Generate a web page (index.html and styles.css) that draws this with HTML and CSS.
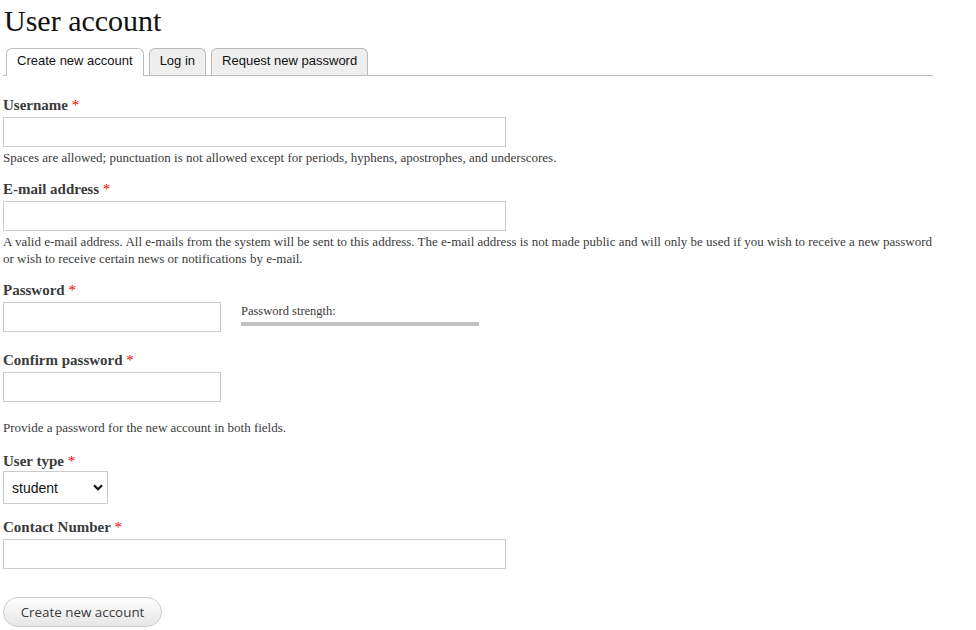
FILE: index.html
```html
<!DOCTYPE html>
<html lang="en">
<head>
<meta charset="utf-8">
<title>User account</title>
<link rel="stylesheet" href="styles.css">
</head>
<body>
<div class="page">
  <h1 class="title">User account</h1>
  <ul class="tabs">
    <li class="tab active">Create new account</li>
    <li class="tab">Log in</li>
    <li class="tab">Request new password</li>
  </ul>
  <form class="form">
    <div class="item">
      <label class="label">Username <span class="req">*</span></label>
      <input class="input wide" type="text">
      <div class="desc">Spaces are allowed; punctuation is not allowed except for periods, hyphens, apostrophes, and underscores.</div>
    </div>
    <div class="item">
      <label class="label">E-mail address <span class="req">*</span></label>
      <input class="input wide" type="text">
      <div class="desc">A valid e-mail address. All e-mails from the system will be sent to this address. The e-mail address is not made public and will only be used if you wish to receive a new password or wish to receive certain news or notifications by e-mail.</div>
    </div>
    <div class="item pass">
      <label class="label">Password <span class="req">*</span></label>
      <div class="pass-row">
        <input class="input short" type="password">
        <div class="strength">
          <div class="strength-text">Password strength:</div>
          <div class="strength-bar"></div>
        </div>
      </div>
    </div>
    <div class="item confirm">
      <label class="label">Confirm password <span class="req">*</span></label>
      <input class="input short" type="password">
    </div>
    <div class="desc provide">Provide a password for the new account in both fields.</div>
    <div class="item usertype">
      <label class="label">User type <span class="req">*</span></label>
      <div class="select-wrap">
        <select class="select"><option>student</option></select>
        <svg class="chev" width="10" height="7" viewBox="0 0 10 7"><path d="M1 1.2 L5 5.2 L9 1.2" fill="none" stroke="#111" stroke-width="2.2"/></svg>
      </div>
    </div>
    <div class="item contact">
      <label class="label">Contact Number <span class="req">*</span></label>
      <input class="input wide" type="text">
    </div>
    <button class="button" type="button">Create new account</button>
  </form>
</div>
</body>
</html>
```
FILE: styles.css
```css
html, body {
  margin: 0;
  padding: 0;
  background: #fff;
}
.page {
  padding: 0 43px 0 3px;
  font-family: "Liberation Serif", Georgia, serif;
  color: #3b3b3b;
}
.title {
  margin: 0;
  padding: 3px 0 0 1px;
  font-family: "Liberation Serif", Georgia, serif;
  font-weight: normal;
  font-size: 30px;
  line-height: 35px;
  color: #111;
}
.tabs {
  list-style: none;
  margin: 10px 0 0 0;
  padding: 0 0 0 3px;
  display: flex;
  gap: 5px;
  border-bottom: 1px solid #bbb;
  height: 27px;
}
.tab {
  font-family: "Liberation Sans", Arial, sans-serif;
  font-size: 13px;
  color: #111;
  background: #eee;
  border: 1px solid #bbb;
  border-bottom: none;
  border-radius: 6px 6px 0 0;
  padding: 0 10px;
  height: 27px;
  line-height: 24px;
  box-sizing: border-box;
}
.tab.active {
  background: #fff;
  height: 28px;
}
.form {
  margin-top: 20px;
}
.item {
  display: flex;
  flex-direction: column;
  align-items: flex-start;
}
.label {
  font-weight: bold;
  font-size: 15px;
  line-height: 18px;
  margin-bottom: 3px;
  color: #3b3b3b;
}
.req {
  color: #e00;
  font-weight: normal;
}
.input {
  box-sizing: border-box;
  height: 30px;
  border: 1px solid #ccc;
  margin: 0;
  padding: 4px;
  font-size: 13px;
  background: #fff;
}
.wide { width: 503px; }
.short { width: 218px; }
.desc {
  font-size: 13px;
  line-height: 17px;
  margin-top: 2px;
  margin-bottom: 14px;
  color: #3b3b3b;
}
.pass-row {
  display: flex;
  align-items: flex-start;
  gap: 20px;
}
.strength {
  width: 238px;
  padding-top: 2px;
}
.strength-text {
  font-size: 12.5px;
  line-height: 14px;
}
.strength-bar {
  margin-top: 4px;
  height: 4px;
  background: #c0c0c0;
}
.confirm { margin-top: 19px; }
.desc.provide { margin-top: 17px; margin-bottom: 16px; }
.select-wrap {
  position: relative;
  width: 105px;
}
.select {
  appearance: none;
  -webkit-appearance: none;
  box-sizing: border-box;
  width: 105px;
  height: 33px;
  border: 1px solid #ccc;
  border-radius: 0;
  background: #fff;
  padding: 0 8px;
  font-family: "Liberation Sans", Arial, sans-serif;
  font-size: 14px;
  color: #111;
}
.chev {
  position: absolute;
  right: 5px;
  top: 13px;
}
.usertype .label { margin-bottom: 1px; }
.contact { margin-top: 14px; }
.button {
  margin-top: 28px;
  box-sizing: border-box;
  width: 159px;
  height: 30px;
  border: 1px solid #ccc;
  border-radius: 15px;
  background: linear-gradient(#fefefe, #e6e6e6);
  font-family: "Open Sans", sans-serif;
  font-size: 13.4px;
  color: #3a3a3a;
  padding: 0;
}
```
